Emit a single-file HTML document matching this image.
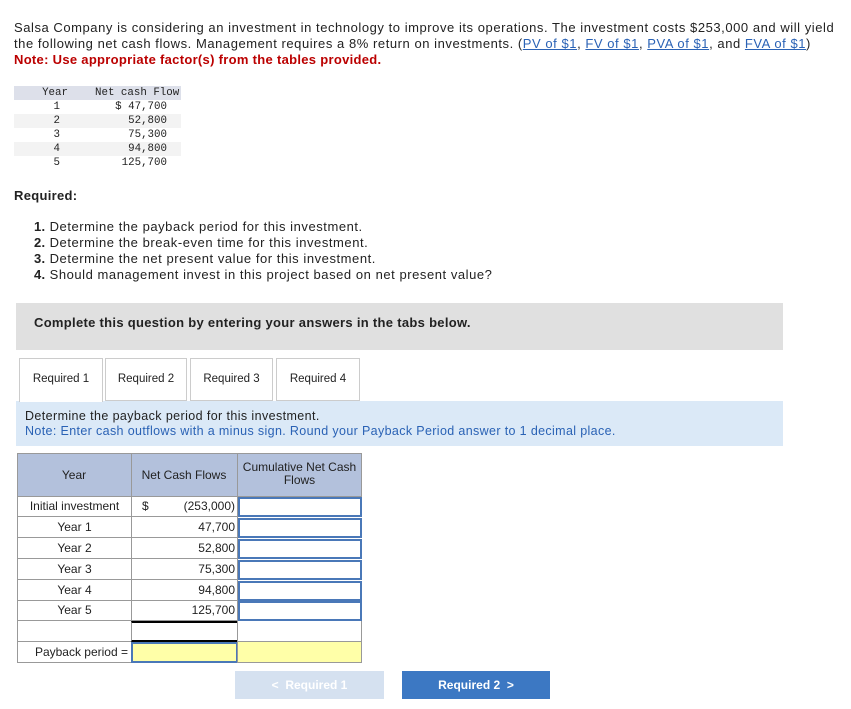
<!DOCTYPE html>
<html><head><style>
body{margin:0;width:851px;height:709px;background:#fff;font-family:"Liberation Sans",sans-serif;color:#222;position:relative;overflow:hidden}
.a{position:absolute;box-sizing:border-box}
.p{font-size:13px;line-height:16px;letter-spacing:0.55px}
.p b{letter-spacing:0.3px}
a{color:#2a62b5}
.mono{font-family:"Liberation Mono",monospace;font-size:10.8px;line-height:14px}
.tab{position:absolute;top:358px;height:41px;border:1px solid #ccc;background:#fff;font-size:11.5px;line-height:41px;text-align:center}
.c{position:absolute;box-sizing:border-box;font-size:12px;line-height:20px;height:21px}
.l{border:1px solid #999;border-top:none}
.in{border:2px solid #4a78b8}
</style></head><body>
<div class="a p" style="left:14px;top:20px;width:836px;white-space:nowrap">Salsa Company is considering an investment in technology to improve its operations. The investment costs $253,000 and will yield<br>the following net cash flows. Management requires a 8% return on investments. (<a href="#">PV of $1</a>, <a href="#">FV of $1</a>, <a href="#">PVA of $1</a>, and <a href="#">FVA of $1</a>)<br><b style="color:#b00">Note: Use appropriate factor(s) from the tables provided.</b></div>
<div class="a" style="left:14px;top:86px;width:167px;height:14px;background:#dde0ea"></div>
<div class="a" style="left:14px;top:114px;width:167px;height:14px;background:#f3f3f3"></div>
<div class="a" style="left:14px;top:142px;width:167px;height:14px;background:#f3f3f3"></div>
<div class="a mono" style="left:14px;top:86px;width:54px;text-align:right">Year</div>
<div class="a mono" style="left:14px;top:100px;width:46px;text-align:right">1<br>2<br>3<br>4<br>5</div>
<div class="a mono" style="left:95px;top:86px">Net cash Flow</div>
<div class="a mono" style="left:100px;top:100px;width:67px;text-align:right">$ 47,700<br>52,800<br>75,300<br>94,800<br>125,700</div>
<div class="a p" style="left:14px;top:188px;font-weight:bold"><b>Required:</b></div>
<div class="a p" style="left:34px;top:219px;white-space:nowrap"><b>1.</b> Determine the payback period for this investment.<br><b>2.</b> Determine the break-even time for this investment.<br><b>3.</b> Determine the net present value for this investment.<br><b>4.</b> Should management invest in this project based on net present value?</div>
<div class="a" style="left:16px;top:303px;width:767px;height:47px;background:#e0e0e0"></div>
<div class="a p" style="left:34px;top:315px"><b>Complete this question by entering your answers in the tabs below.</b></div>
<div class="tab" style="left:19px;width:82px;height:43px;border-bottom:none;z-index:2">Required 1</div>
<div class="tab" style="left:105px;width:80px">Required 2</div>
<div class="tab" style="left:190px;width:81px">Required 3</div>
<div class="tab" style="left:276px;width:82px">Required 4</div>
<div class="a" style="left:16px;top:401px;width:767px;height:45px;background:#dbe9f7"></div>
<div class="a p" style="left:25px;top:409px;font-size:12.5px;line-height:15px;letter-spacing:0.4px;white-space:nowrap">Determine the payback period for this investment.<br><span style="color:#2a62b5;letter-spacing:0.36px">Note: Enter cash outflows with a minus sign. Round your Payback Period answer to 1 decimal place.</span></div>

<div class="a" style="left:17px;top:453px;width:345px;height:44px;background:#b3c1dc;border:1px solid #999"></div>
<div class="a" style="left:131px;top:453px;width:1px;height:44px;background:#999"></div>
<div class="a" style="left:237px;top:453px;width:1px;height:44px;background:#999"></div>
<div class="a" style="left:17px;top:468px;width:114px;text-align:center;font-size:12px">Year</div>
<div class="a" style="left:131px;top:468px;width:106px;text-align:center;font-size:12px">Net Cash Flows</div>
<div class="a" style="left:237px;top:461px;width:125px;text-align:center;font-size:12px;line-height:13px">Cumulative Net Cash<br>Flows</div>

<div class="c l" style="left:17px;top:496px;width:115px;text-align:center">Initial investment</div>
<div class="c l" style="left:131px;top:496px;width:107px;text-align:right;padding-right:2px"><span style="float:left;padding-left:10px">$</span>(253,000)</div>
<div class="c in" style="left:238px;top:497px;width:124px;height:20px"></div>
<div class="c l" style="left:17px;top:517px;width:115px;text-align:center">Year 1</div>
<div class="c l" style="left:131px;top:517px;width:107px;text-align:right;padding-right:2px">47,700</div>
<div class="c in" style="left:238px;top:518px;width:124px;height:20px"></div>
<div class="c l" style="left:17px;top:538px;width:115px;text-align:center">Year 2</div>
<div class="c l" style="left:131px;top:538px;width:107px;text-align:right;padding-right:2px">52,800</div>
<div class="c in" style="left:238px;top:539px;width:124px;height:20px"></div>
<div class="c l" style="left:17px;top:559px;width:115px;text-align:center">Year 3</div>
<div class="c l" style="left:131px;top:559px;width:107px;text-align:right;padding-right:2px">75,300</div>
<div class="c in" style="left:238px;top:560px;width:124px;height:20px"></div>
<div class="c l" style="left:17px;top:580px;width:115px;text-align:center">Year 4</div>
<div class="c l" style="left:131px;top:580px;width:107px;text-align:right;padding-right:2px">94,800</div>
<div class="c in" style="left:238px;top:581px;width:124px;height:20px"></div>
<div class="c l" style="left:17px;top:600px;width:115px;text-align:center">Year 5</div>
<div class="c l" style="left:131px;top:600px;width:107px;text-align:right;padding-right:2px">125,700</div>
<div class="c in" style="left:238px;top:601px;width:124px;height:20px"></div>
<div class="c l" style="left:17px;top:621px;width:115px"></div>
<div class="c l" style="left:131px;top:621px;width:107px;border-top:2px solid #000;border-bottom:2px solid #000"></div>
<div class="c l" style="left:237px;top:621px;width:125px"></div>
<div class="c l" style="left:17px;top:642px;width:115px;text-align:right;padding-right:3px">Payback period =</div>
<div class="c in" style="left:131px;top:642px;width:107px;background:#ffffa8"></div>
<div class="c l" style="left:237px;top:642px;width:125px;background:#ffffa8"></div>

<div class="a" style="left:235px;top:671px;width:149px;height:28px;background:#d5e1f0;color:#fff;font-size:12px;font-weight:bold;line-height:28px;text-align:center">&lt;&nbsp; Required 1</div>
<div class="a" style="left:402px;top:671px;width:148px;height:28px;background:#3c78c3;color:#fff;font-size:12px;font-weight:bold;line-height:28px;text-align:center">Required 2 &nbsp;&gt;</div>
</body></html>
